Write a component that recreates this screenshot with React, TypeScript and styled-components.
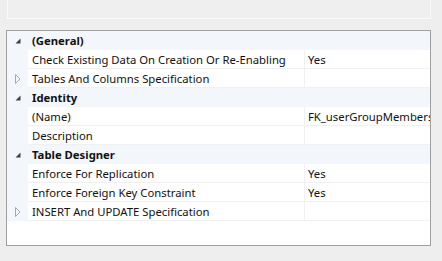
import React from "react";
import styled, { createGlobalStyle } from "styled-components";

const Global = createGlobalStyle`
  html, body { margin: 0; padding: 0; background: #eeeeee; }
  body { font-family: "Segoe UI", "Noto Sans", "Open Sans", sans-serif; }
`;

const Page = styled.div`
  width: 442px;
  height: 261px;
  background: #eeeeee;
  display: flex;
  flex-direction: column;
  padding-left: 6px;
  box-sizing: border-box;
`;

const TopPanel = styled.div`
  margin-left: 1px;
  width: 424px;
  height: 19px;
  box-sizing: border-box;
  background: #efefef;
  border: 1px solid #fafafa;
  border-top: none;
`;

const Grid = styled.div`
  margin-top: 11px;
  width: 425px;
  height: 216px;
  box-sizing: border-box;
  border: 1px solid #a0a0a0;
  background: #ffffff;
  display: flex;
  flex-direction: column;
  overflow: hidden;
`;

const Row = styled.div<{ $category?: boolean }>`
  display: flex;
  height: 19px;
  flex: none;
  background: ${(p) => (p.$category ? "#f3f6fb" : "#ffffff")};
  font-size: 11.3px;
  line-height: 18px;
  color: #111111;
  font-weight: ${(p) => (p.$category ? 700 : 400)};
`;

const Gutter = styled.div`
  width: 21px;
  flex: none;
  background: #f3f6fb;
  display: flex;
  align-items: center;
  justify-content: center;
  padding-left: 1px;
  box-sizing: border-box;
`;

const NameCell = styled.div<{ $category?: boolean }>`
  width: ${(p) => (p.$category ? "auto" : "277px")};
  flex: ${(p) => (p.$category ? "1" : "none")};
  box-sizing: border-box;
  padding-left: 4px;
  padding-top: 1px;
  white-space: nowrap;
  overflow: hidden;
  border-right: ${(p) => (p.$category ? "none" : "1px solid #f0f0f0")};
  border-bottom: 1px solid ${(p) => (p.$category ? "#f3f6fb" : "#f0f0f0")};
`;

const ValueCell = styled.div`
  flex: 1;
  padding-left: 3px;
  padding-top: 1px;
  white-space: nowrap;
  overflow: hidden;
  border-bottom: 1px solid #f0f0f0;
`;

const Expanded = () => (
  <svg width="6" height="6" viewBox="0 0 6 6">
    <polygon points="5.5,0.5 5.5,5.5 0.5,5.5" fill="#404040" />
  </svg>
);

const Collapsed = () => (
  <svg width="6" height="10" viewBox="0 0 6 10">
    <polygon points="0.5,0.5 5,5 0.5,9.5" fill="none" stroke="#a8a8a8" strokeWidth="1" />
  </svg>
);

type Item =
  | { kind: "cat"; label: string }
  | { kind: "prop"; label: string; value?: string; expandable?: boolean };

const items: Item[] = [
  { kind: "cat", label: "(General)" },
  { kind: "prop", label: "Check Existing Data On Creation Or Re-Enabling", value: "Yes" },
  { kind: "prop", label: "Tables And Columns Specification", expandable: true },
  { kind: "cat", label: "Identity" },
  { kind: "prop", label: "(Name)", value: "FK_userGroupMembers_userGroups" },
  { kind: "prop", label: "Description" },
  { kind: "cat", label: "Table Designer" },
  { kind: "prop", label: "Enforce For Replication", value: "Yes" },
  { kind: "prop", label: "Enforce Foreign Key Constraint", value: "Yes" },
  { kind: "prop", label: "INSERT And UPDATE Specification", expandable: true },
];

export default function App() {
  return (
    <>
      <Global />
      <Page>
        <TopPanel />
        <Grid>
          {items.map((it, i) =>
            it.kind === "cat" ? (
              <Row key={i} $category>
                <Gutter>
                  <Expanded />
                </Gutter>
                <NameCell $category>{it.label}</NameCell>
              </Row>
            ) : (
              <Row key={i}>
                <Gutter>{it.expandable ? <Collapsed /> : null}</Gutter>
                <NameCell>{it.label}</NameCell>
                <ValueCell>{it.value ?? ""}</ValueCell>
              </Row>
            )
          )}
        </Grid>
      </Page>
    </>
  );
}
